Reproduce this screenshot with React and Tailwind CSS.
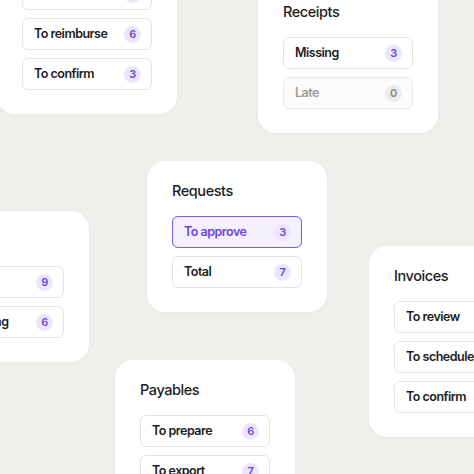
import React from "react";

function Badge({ n, tone }) {
  const cls =
    tone === "gray"
      ? "bg-[#ececea] text-[#8a8a8a]"
      : "bg-[#ece6fd] text-[#6b46e0]";
  return (
    <span
      className={
        "flex h-[17px] w-[17px] items-center justify-center rounded-full text-[11px] font-semibold leading-none " +
        cls
      }
    >
      {n}
    </span>
  );
}

function Row({ label, n, variant }) {
  let box = "border-[#e4e4e1] bg-white text-[#1c1c1c]";
  let tone = "purple";
  if (variant === "active") box = "border-[#7b5ce3] bg-[#f4f0ff] text-[#6b46e0]";
  if (variant === "muted") {
    box = "border-[#e8e8e5] bg-[#fbfbfa] text-[#9a9a9a]";
    tone = "gray";
  }
  return (
    <div
      className={
        "flex h-[32px] w-[130px] shrink-0 items-center justify-between rounded-[6px] border pl-[11px] pr-[10px] text-[12.5px] font-semibold tracking-[-0.04em] " +
        box
      }
    >
      <span className="whitespace-nowrap">{label}</span>
      {n !== undefined && <Badge n={n} tone={tone} />}
    </div>
  );
}

function Card({ title, rows, pos }) {
  return (
    <div
      className={
        "absolute flex w-[180px] flex-col rounded-[18px] bg-white px-[25px] pt-[20px] pb-[24px] shadow-[0_1px_4px_rgba(0,0,0,0.04)] " +
        pos
      }
    >
      <div className="mb-[15px] h-[20px] text-[14.5px] font-medium leading-[20px] tracking-[-0.03em] text-[#1c1c1c]">
        {title}
      </div>
      <div className="flex flex-col gap-[8px]">
        {rows.map((r, i) => (
          <Row key={i} {...r} />
        ))}
      </div>
    </div>
  );
}

export default function App() {
  return (
    <div
      className="relative h-[474px] w-[474px] overflow-hidden bg-[#efefeb]"
      style={{ fontFamily: "Inter, 'Noto Sans', sans-serif" }}
    >
      <Card
        pos="left-[-3px] top-[-77px]"
        title="Expenses"
        rows={[
          { label: "To submit", n: 2 },
          { label: "To reimburse", n: 6 },
          { label: "To confirm", n: 3 },
        ]}
      />
      <Card
        pos="left-[258px] top-[-18px]"
        title="Receipts"
        rows={[
          { label: "Missing", n: 3 },
          { label: "Late", n: 0, variant: "muted" },
        ]}
      />
      <Card
        pos="left-[147px] top-[161px]"
        title="Requests"
        rows={[
          { label: "To approve", n: 3, variant: "active" },
          { label: "Total", n: 7 },
        ]}
      />
      <Card
        pos="left-[-91px] top-[211px]"
        title="Cards"
        rows={[
          { label: "Active", n: 9 },
          { label: "Processing", n: 6 },
        ]}
      />
      <Card
        pos="left-[369px] top-[246px]"
        title="Invoices"
        rows={[
          { label: "To review" },
          { label: "To schedule" },
          { label: "To confirm" },
        ]}
      />
      <Card
        pos="left-[115px] top-[360px]"
        title="Payables"
        rows={[
          { label: "To prepare", n: 6 },
          { label: "To export", n: 7 },
        ]}
      />
    </div>
  );
}
